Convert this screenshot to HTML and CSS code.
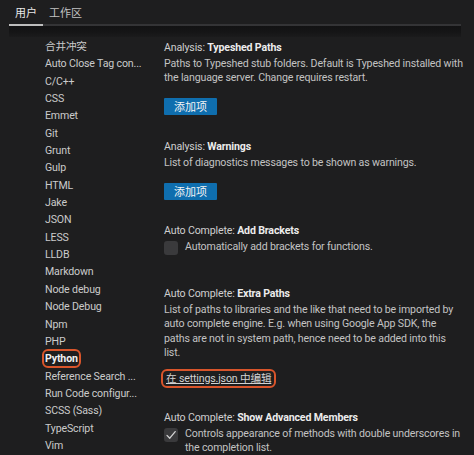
FILE: index.html
```html
<!DOCTYPE html>
<html lang="zh-CN">
<head>
<meta charset="utf-8">
<title>设置</title>
<link rel="stylesheet" href="styles.css">
</head>
<body>
<div class="app">
  <div class="tabs">
    <span class="tab active">用户</span>
    <span class="tab">工作区</span>
  </div>
  <div class="shadow"></div>
  <div class="body">
    <nav class="toc">
      <div class="toc-item">合井冲突</div>
      <div class="toc-item">Auto Close Tag con...</div>
      <div class="toc-item">C/C++</div>
      <div class="toc-item">CSS</div>
      <div class="toc-item">Emmet</div>
      <div class="toc-item">Git</div>
      <div class="toc-item">Grunt</div>
      <div class="toc-item">Gulp</div>
      <div class="toc-item">HTML</div>
      <div class="toc-item">Jake</div>
      <div class="toc-item">JSON</div>
      <div class="toc-item">LESS</div>
      <div class="toc-item">LLDB</div>
      <div class="toc-item">Markdown</div>
      <div class="toc-item">Node debug</div>
      <div class="toc-item">Node Debug</div>
      <div class="toc-item">Npm</div>
      <div class="toc-item">PHP</div>
      <div class="toc-item"><span class="toc-selected">Python</span></div>
      <div class="toc-item">Reference Search ...</div>
      <div class="toc-item">Run Code configur...</div>
      <div class="toc-item">SCSS (Sass)</div>
      <div class="toc-item">TypeScript</div>
      <div class="toc-item">Vim</div>
    </nav>
    <main class="settings">
      <section class="setting after-button">
        <div class="title">Analysis: <b>Typeshed Paths</b></div>
        <div class="desc">Paths to Typeshed stub folders. Default is Typeshed installed with the language server. Change requires restart.</div>
        <button class="add-btn">添加项</button>
      </section>
      <section class="setting after-button">
        <div class="title">Analysis: <b>Warnings</b></div>
        <div class="desc">List of diagnostics messages to be shown as warnings.</div>
        <button class="add-btn">添加项</button>
      </section>
      <section class="setting after-check">
        <div class="title">Auto Complete: <b>Add Brackets</b></div>
        <div class="check-row">
          <span class="checkbox"></span>
          <span class="desc">Automatically add brackets for functions.</span>
        </div>
      </section>
      <section class="setting after-link">
        <div class="title">Auto Complete: <b>Extra Paths</b></div>
        <div class="desc">List of paths to libraries and the like that need to be imported by auto complete engine. E.g. when using Google App SDK, the paths are not in system path, hence need to be added into this list.</div>
        <div class="link-row"><a class="edit-link" href="#">在 settings.json 中编辑</a></div>
      </section>
      <section class="setting">
        <div class="title">Auto Complete: <b>Show Advanced Members</b></div>
        <div class="check-row">
          <span class="checkbox checked">
            <svg viewBox="0 0 14 14" width="14" height="14"><path d="M3 7.4 L5.8 10.2 L11.2 3.6" fill="none" stroke="#d4d4d4" stroke-width="1.3" stroke-linecap="round" stroke-linejoin="round"/></svg>
          </span>
          <span class="desc">Controls appearance of methods with double underscores in the completion list.</span>
        </div>
      </section>
    </main>
  </div>
</div>
</body>
</html>
```

FILE: styles.css
```css
html, body {
  margin: 0;
  padding: 0;
  background: #1e1e1f;
}

body {
  font-family: Roboto, "Liberation Sans", "Noto Sans CJK SC", sans-serif;
  font-size: 10.6px;
  letter-spacing: -0.15px;
  color: #cccccc;
}

.app {
  width: 474px;
  height: 455px;
  overflow: hidden;
}

.tabs {
  margin-left: 9px;
  width: 452px;
  display: flex;
  border-bottom: 2px solid #343436;
  box-sizing: border-box;
  height: 26px;
}

.tab {
  padding: 0 6px;
  height: 24px;
  line-height: 24px;
  color: #c2c2c2;
  font-family: "Noto Sans CJK SC", sans-serif;
  font-size: 11px;
  letter-spacing: 0;
  box-sizing: border-box;
}

.tab.active {
  color: #e8e8e8;
  border-bottom: 2px solid #bdbdbd;
  margin-bottom: -2px;
  height: 26px;
}

.shadow {
  margin-left: 9px;
  width: 452px;
  height: 11px;
  background: linear-gradient(#121213, #161617 60%, #1b1b1c);
}

.body {
  display: flex;
  padding-left: 9px;
}

.toc {
  width: 155px;
  flex: none;
  padding-left: 36px;
  padding-top: 1px;
  box-sizing: border-box;
}

.toc-item {
  height: 17.35px;
  line-height: 17.35px;
  white-space: nowrap;
  color: #cbcbcb;
}

.toc-selected {
  font-weight: bold;
  color: #f0f0f0;
  outline: 2px solid #d9552b;
  outline-offset: 1px;
  border-radius: 3px;
}

.settings {
  width: 299px;
  flex: none;
  padding-top: 1.5px;
}

.setting {
  padding-bottom: 22.5px;
}

.setting.after-check {
  padding-bottom: 29.5px;
}

.setting.after-link {
  padding-bottom: 23px;
}

.title {
  height: 17px;
  line-height: 17px;
  color: #cfcfcf;
  white-space: nowrap;
}

.title b {
  font-weight: 700;
  color: #ececec;
}

.desc {
  margin-top: 1px;
  line-height: 14.5px;
  color: #c3c3c3;
}

.add-btn {
  display: block;
  margin-top: 12.5px;
  width: 53px;
  height: 17px;
  padding: 0;
  border: none;
  border-radius: 1px;
  background: #0f6eae;
  color: #f4f4f4;
  font-family: "Noto Sans CJK SC", sans-serif;
  font-size: 11px;
  letter-spacing: 0;
  line-height: 17px;
}

.check-row {
  display: flex;
  align-items: flex-start;
  gap: 7px;
  margin-top: 1px;
}

.check-row .desc {
  margin-top: 0;
}

.checkbox {
  flex: none;
  width: 14px;
  height: 14px;
  margin-top: 1px;
  border-radius: 3px;
  background: #3a3a3c;
  display: flex;
}

.link-row {
  margin-top: 11px;
  height: 14px;
  line-height: 14px;
}

.edit-link {
  color: #d2d2d2;
  text-decoration: underline;
  outline: 2px solid #d9552b;
  outline-offset: 1px;
  border-radius: 3px;
  padding: 0 2px;
}
```
